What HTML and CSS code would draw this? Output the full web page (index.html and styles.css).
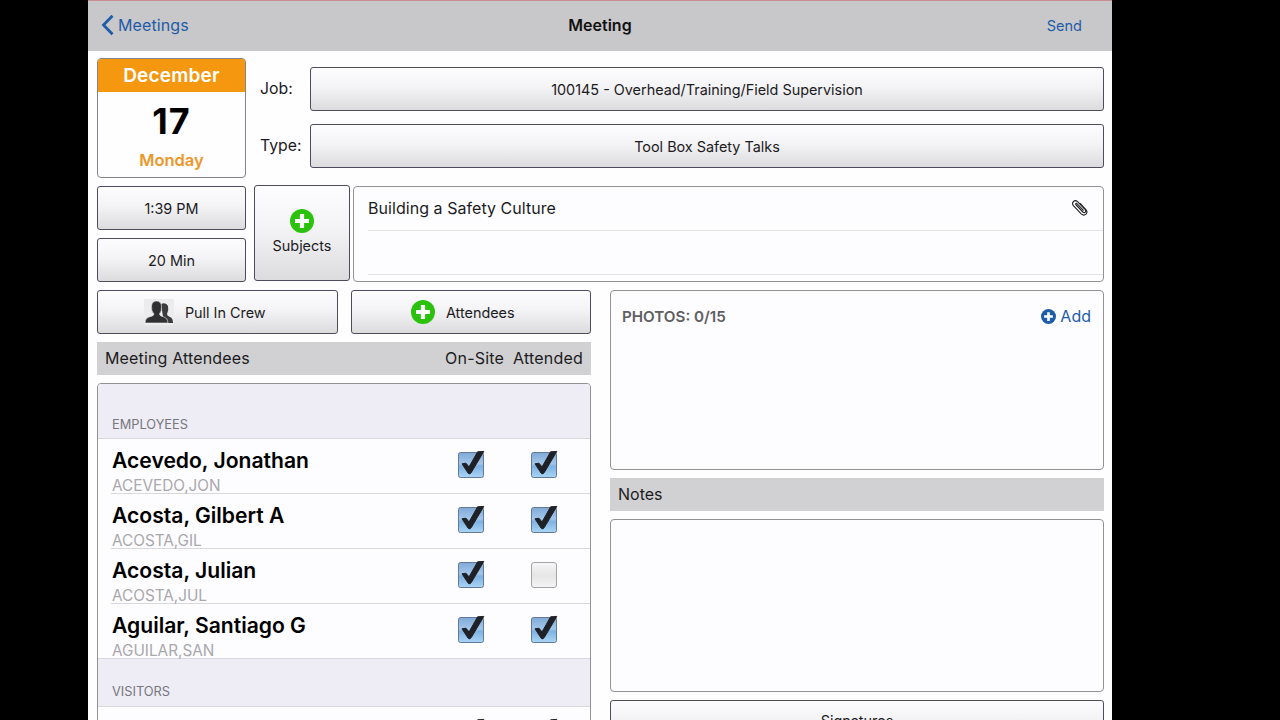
FILE: index.html
```html
<!DOCTYPE html>
<html lang="en">
<head>
    <meta charset="UTF-8">
    <meta name="viewport" content="width=device-width, initial-scale=1.0">
    <title>Meeting</title>
    <link rel="stylesheet" href="styles.css">
</head>
<body>
    <!-- Shared icons -->
    <svg class="icon-defs" width="0" height="0">
        <defs>
            <linearGradient id="box-on" x1="0" y1="0" x2="0" y2="1">
                <stop offset="0" stop-color="#7fa9d6"/>
                <stop offset="0.45" stop-color="#a3c7ea"/>
                <stop offset="0.55" stop-color="#7fb2e2"/>
                <stop offset="1" stop-color="#a9d4f5"/>
            </linearGradient>
            <linearGradient id="box-off" x1="0" y1="0" x2="0" y2="1">
                <stop offset="0" stop-color="#f6f6f6"/>
                <stop offset="0.5" stop-color="#e6e6e6"/>
                <stop offset="1" stop-color="#f4f4f4"/>
            </linearGradient>
            <symbol id="checked" viewBox="0 0 30 32">
                <rect x="2.5" y="4.5" width="25" height="25" rx="2" fill="url(#box-on)" stroke="#64799a"/>
                <path d="M6 15.8 L10 15.2 L13 19 L21.6 3.8 L27.8 3.4 L15.6 24 Q13.8 27.4 12 25 Z" fill="#1f2126" stroke="#1f2126" stroke-linejoin="round"/>
            </symbol>
            <symbol id="unchecked" viewBox="0 0 30 32">
                <rect x="2.5" y="4.5" width="25" height="25" rx="2.5" fill="url(#box-off)" stroke="#a5a3a6"/>
            </symbol>
            <symbol id="plus" viewBox="0 0 24 24">
                <circle cx="12" cy="12" r="12" fill="currentColor"/>
                <path d="M12 5v14M5 12h14" stroke="#fff" stroke-width="4.2"/>
            </symbol>
        </defs>
    </svg>

    <div class="app">
        <header class="navbar">
            <a class="back">
                <svg width="14" height="22" viewBox="0 0 14 22"><path d="M11.5 1.8 L2.5 11 L11.5 20.2" fill="none" stroke="currentColor" stroke-width="2.8"/></svg>
                <span>Meetings</span>
            </a>
            <h1>Meeting</h1>
            <a class="send">Send</a>
        </header>

        <main class="content">
            <section class="top-row">
                <div class="date-card">
                    <div class="month">December</div>
                    <div class="day">17</div>
                    <div class="weekday">Monday</div>
                </div>
                <div class="fields">
                    <label>Job:</label>
                    <button class="btn">100145 - Overhead/Training/Field Supervision</button>
                    <label>Type:</label>
                    <button class="btn">Tool Box Safety Talks</button>
                </div>
            </section>

            <section class="subject-row">
                <div class="times">
                    <button class="btn">1:39 PM</button>
                    <button class="btn">20 Min</button>
                </div>
                <button class="btn subjects-btn">
                    <svg class="plus-icon" width="24" height="24"><use href="#plus"/></svg>
                    <span>Subjects</span>
                </button>
                <div class="panel subject-list">
                    <div class="subject">
                        <span>Building a Safety Culture</span>
                        <svg width="17" height="18" viewBox="0 0 17 18">
                            <path d="M4.8 5.5 L11.8 13 Q13.2 14.2 14.3 13.1 Q15.3 12 14.2 10.7 L6.6 2.7 Q4.5 .8 2.5 2.5 Q.6 4.5 2.4 6.7 L10.2 14.9 Q12.7 17.3 15 15.2 Q17 13 14.9 10.5 L9.2 4.5 M4.8 5.5 Q4.4 4.3 5.6 4.2 L12.2 11.2" fill="none" stroke="#222" stroke-width="1.1" stroke-linecap="round"/>
                        </svg>
                    </div>
                    <div class="subject"></div>
                </div>
            </section>

            <section class="columns">
                <div class="left-col">
                    <div class="crew-buttons">
                        <button class="btn">
                            <svg class="crew-icon" width="30" height="26" viewBox="0 0 30 26">
                                <rect width="30" height="26" fill="#ececee"/>
                                <path d="M17 5 Q22 3 24 7 Q25 11 23 15 Q23 17 26 18 Q29 19 29 24 H20 Z" fill="#3c3c3f"/>
                                <path d="M1 24 Q1 19 5 18 Q10 17 10 15 Q7 12 7.5 7 Q8 2 12.5 2 Q17 2 17.5 7 Q18 12 15.5 15 Q15.5 17 20 18 Q24 19 24 24 Z" fill="#303033" stroke="#ececee" stroke-width=".6"/>
                            </svg>
                            <span>Pull In Crew</span>
                        </button>
                        <button class="btn">
                            <svg class="plus-icon" width="24" height="24"><use href="#plus"/></svg>
                            <span>Attendees</span>
                        </button>
                    </div>
                    <div class="bar attendees-bar">
                        <span class="title">Meeting Attendees</span>
                        <span>On-Site</span>
                        <span>Attended</span>
                    </div>
                    <div class="panel attendees">
                        <div class="group first">EMPLOYEES</div>
                        <div class="person">
                            <div class="who"><b>Acevedo, Jonathan</b><small>ACEVEDO,JON</small></div>
                            <svg class="check"><use href="#checked"/></svg>
                            <svg class="check"><use href="#checked"/></svg>
                        </div>
                        <div class="person">
                            <div class="who"><b>Acosta, Gilbert A</b><small>ACOSTA,GIL</small></div>
                            <svg class="check"><use href="#checked"/></svg>
                            <svg class="check"><use href="#checked"/></svg>
                        </div>
                        <div class="person">
                            <div class="who"><b>Acosta, Julian</b><small>ACOSTA,JUL</small></div>
                            <svg class="check"><use href="#checked"/></svg>
                            <svg class="check"><use href="#unchecked"/></svg>
                        </div>
                        <div class="person">
                            <div class="who"><b>Aguilar, Santiago G</b><small>AGUILAR,SAN</small></div>
                            <svg class="check"><use href="#checked"/></svg>
                            <svg class="check"><use href="#checked"/></svg>
                        </div>
                        <div class="group">VISITORS</div>
                        <div class="person">
                            <div class="who"><b>Baker, Frank</b></div>
                            <svg class="check"><use href="#checked"/></svg>
                            <svg class="check"><use href="#checked"/></svg>
                        </div>
                    </div>
                </div>

                <div class="right-col">
                    <div class="panel photos">
                        <span class="photos-title">PHOTOS: 0/15</span>
                        <a class="add"><svg width="15" height="15"><use href="#plus"/></svg><span>Add</span></a>
                    </div>
                    <div class="bar notes-bar">Notes</div>
                    <div class="panel notes"></div>
                    <button class="btn signatures">Signatures</button>
                </div>
            </section>
        </main>
    </div>
</body>
</html>
```

FILE: styles.css
```css
* {
    box-sizing: border-box;
}

body {
    margin: 0;
    height: 720px;
    overflow: hidden;
    background-color: #000;
    color: #1c1c1e;
    font-family: Inter, "Liberation Sans", sans-serif;
    font-size: 16px;
}

svg {
    display: block;
    flex: none;
}

.app {
    width: 1024px;
    height: 720px;
    margin-left: 88px;
    overflow: hidden;
    background-color: #fefdff;
}

.navbar {
    display: grid;
    grid-template-columns: 1fr auto 1fr;
    align-items: center;
    height: 51px;
    padding: 0 30px 2px 13px;
    border-top: 1px solid #cc8d92;
    background-color: #c8c7c9;
}

.navbar h1 {
    margin: 0 0 0 17px;
    color: #111;
    font-size: 16px;
    font-weight: 600;
}

.back,
.send,
.add {
    color: #1e5ca8;
}

.back {
    display: flex;
    align-items: center;
    gap: 3px;
    letter-spacing: 0.1px;
}

.send {
    justify-self: end;
    font-size: 14.5px;
}

.content {
    padding: 7px 8px 0 9px;
}

.btn {
    display: flex;
    align-items: center;
    justify-content: center;
    height: 44px;
    padding: 0;
    border: 1px solid #4d4c5c;
    border-radius: 3px;
    background: linear-gradient(#fdfcfe, #f4f3f5 45%, #dcdbdd);
    color: #1c1c1e;
    font-family: inherit;
    font-size: 14.4px;
}

.panel {
    border: 1px solid #929195;
    border-radius: 4px;
    background-color: #fdfcfe;
}

.bar {
    display: flex;
    align-items: center;
    height: 33px;
    padding: 0 8px 1px;
    background-color: #d1d0d2;
}

.plus-icon {
    color: #2bc20e;
}

/* Date, job and type */
.top-row {
    display: flex;
    gap: 14px;
    height: 120px;
}

.date-card {
    width: 149px;
    overflow: hidden;
    border: 1px solid #85838a;
    border-radius: 4px;
    text-align: center;
}

.month {
    height: 33px;
    background-color: #f5970f;
    color: #fff;
    font-size: 19px;
    font-weight: 600;
    letter-spacing: 0.2px;
    line-height: 34px;
}

.day {
    height: 57px;
    color: #000;
    font-size: 36px;
    font-weight: 700;
    letter-spacing: 1px;
    line-height: 58px;
}

.weekday {
    color: #eb982a;
    font-size: 16.5px;
    font-weight: 600;
    line-height: 22px;
}

.fields {
    display: grid;
    flex: 1;
    grid-template-columns: 50px 1fr;
    gap: 13px 0;
    align-content: start;
    align-items: center;
    padding-top: 9px;
}

.fields label {
    padding-bottom: 1px;
    font-size: 15.8px;
}

/* Time, duration and subjects */
.subject-row {
    display: flex;
    margin-top: 8px;
}

.times {
    display: flex;
    flex-direction: column;
    gap: 8px;
    width: 149px;
}

.subjects-btn {
    flex-direction: column;
    gap: 4px;
    width: 96px;
    height: 96px;
    margin: -1px 3px 0 8px;
    padding-bottom: 3px;
}

.subject-list {
    flex: 1;
    height: 96px;
    padding-left: 14px;
}

.subject {
    display: flex;
    align-items: center;
    justify-content: space-between;
    height: 44px;
    padding-right: 15px;
    border-bottom: 1px solid #e2e1e4;
    letter-spacing: 0.05px;
}

.subject:first-child {
    padding-bottom: 1px;
}

/* Attendees */
.columns {
    display: flex;
    gap: 19px;
    margin-top: 8px;
}

.left-col {
    width: 494px;
}

.crew-buttons {
    display: grid;
    grid-template-columns: 1fr 1fr;
    gap: 13px;
}

.crew-buttons .btn {
    gap: 11px;
    padding-right: 25px;
}

.crew-buttons .btn:last-child {
    padding-right: 16px;
}

.attendees-bar {
    gap: 9px;
    margin-top: 8px;
}

.attendees-bar span {
    letter-spacing: 0.2px;
}

.attendees-bar .title {
    flex: 1;
    letter-spacing: 0.15px;
}

.attendees {
    height: 400px;
    margin-top: 8px;
    overflow: hidden;
}

.group {
    height: 48px;
    padding: 25px 14px 0;
    border-top: 1px solid #d9d8de;
    background-color: #eeedf5;
    color: #77767e;
    font-size: 12.8px;
    line-height: 16px;
}

.group.first {
    height: 54px;
    padding-top: 33px;
    border-top: none;
}

.person {
    display: flex;
    align-items: flex-start;
    height: 55px;
    padding-right: 31px;
    border-top: 1px solid #d9d8de;
}

/* Row separators start at the text, not at the edge */
.person + .person {
    border-image: linear-gradient(to right, transparent 14px, #d9d8de 14px) 1;
}

.who {
    flex: 1;
    padding: 8px 0 0 14px;
}

.who b {
    display: block;
    color: #000;
    font-size: 21.1px;
    font-weight: 600;
    line-height: 28px;
}

.who small {
    display: block;
    color: #a9a8ac;
    font-size: 15.3px;
    line-height: 21px;
}

.check {
    width: 30px;
    height: 32px;
    margin: 9px 0 0 43px;
}

/* Photos, notes and signatures */
.right-col {
    flex: 1;
}

.photos {
    display: flex;
    justify-content: space-between;
    height: 180px;
    padding: 15px 12px 15px 11px;
    line-height: 21px;
}

.photos-title {
    color: #5f5e62;
    font-size: 15.2px;
    font-weight: 600;
}

.add {
    display: flex;
    gap: 4px;
    height: 20px;
    align-items: center;
}

.notes-bar {
    margin-top: 8px;
}

.notes {
    height: 173px;
    margin: 8px 0;
}

.signatures {
    width: 100%;
    height: 40px;
}
```
